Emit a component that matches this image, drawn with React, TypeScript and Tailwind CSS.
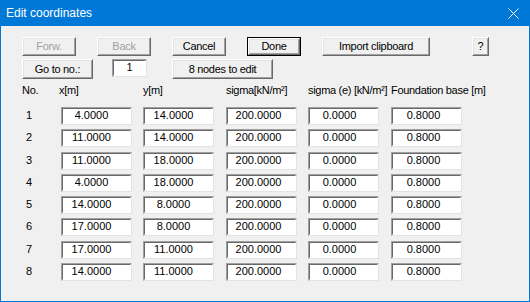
import React from "react";

const font = { fontFamily: '"Liberation Sans", Arial, sans-serif' };

function Btn({
  w,
  h = "h-[19px]",
  children,
  disabled,
  def,
  cls = "",
}: {
  w: string;
  h?: string;
  children: React.ReactNode;
  disabled?: boolean;
  def?: boolean;
  cls?: string;
}) {
  const inner = (
    <div className="h-full border border-t-white border-l-white border-b-[#696969] border-r-[#696969]">
      <div
        className={`h-full border border-t-[#e3e3e3] border-l-[#e3e3e3] border-b-[#a0a0a0] border-r-[#a0a0a0] bg-[#f0f0f0] flex items-center justify-center text-[11px] leading-[13px] tracking-[-0.3px] ${
          disabled ? "text-[#a0a0a0]" : "text-black"
        }`}
      >
        {children}
      </div>
    </div>
  );
  return (
    <div className={`${w} ${h} shrink-0 ${def ? "border border-black" : ""} ${cls}`}>{inner}</div>
  );
}

function Field({ value, w = "w-[71px]", pr = "pr-[10px]" }: { value: string; w?: string; pr?: string }) {
  return (
    <div className={`${w} h-[18px] shrink-0 border border-t-[#a0a0a0] border-l-[#a0a0a0] border-b-[#e3e3e3] border-r-[#e3e3e3]`}>
      <div
        className={`h-full border border-t-[#696969] border-l-[#696969] border-b-white border-r-white bg-white flex items-center justify-center ${pr} pb-[2px] text-[11px] leading-[13px] text-black`}
      >
        {value}
      </div>
    </div>
  );
}

const rows = [
  ["4.0000", "14.0000"],
  ["11.0000", "14.0000"],
  ["11.0000", "18.0000"],
  ["4.0000", "18.0000"],
  ["14.0000", "8.0000"],
  ["17.0000", "8.0000"],
  ["17.0000", "11.0000"],
  ["14.0000", "11.0000"],
];

const rowMt = ["mt-[10px]", "mt-[4px]", "mt-[5px]", "mt-[4px]", "mt-[4px]", "mt-[4px]", "mt-[5px]", "mt-[4px]"];

export default function App() {
  return (
    <div
      className="w-[530px] h-[302px] border border-[#0078d7] bg-[#0078d7] flex flex-col overflow-hidden"
      style={font}
    >
      <div className="h-[25px] shrink-0 flex items-center justify-between pl-[5px] pr-[10px]">
        <span className="text-white text-[12px] leading-[14px] pb-[1px]">Edit coordinates</span>
        <svg width="11" height="11" viewBox="0 0 11 11" className="mb-[1px]">
          <path d="M0.5 0.5 L10.5 10.5 M10.5 0.5 L0.5 10.5" stroke="white" strokeWidth="1" />
        </svg>
      </div>
      <div className="flex-1 bg-[#f0f0f0] pl-[21px] pt-[11px] flex flex-col">
        <div className="flex items-start">
          <Btn w="w-[54px]" disabled>
            Forw.
          </Btn>
          <Btn w="w-[54px]" disabled cls="ml-[21px]">
            Back
          </Btn>
          <Btn w="w-[54px]" cls="ml-[21px]">
            Cancel
          </Btn>
          <Btn w="w-[54px]" def cls="ml-[21px]">
            Done
          </Btn>
          <Btn w="w-[108px]" cls="ml-[21px]">
            Import clipboard
          </Btn>
          <Btn w="w-[17px]" cls="ml-[42px]">
            ?
          </Btn>
        </div>
        <div className="flex items-start mt-[3px]">
          <Btn w="w-[71px]" h="h-[20px]">
            Go to no.:
          </Btn>
          <div className="ml-[19px]">
            <Field value="1" w="w-[35px]" pr="pr-0" />
          </div>
          <Btn w="w-[101px]" h="h-[20px]" cls="ml-[25px]">
            8 nodes to edit
          </Btn>
        </div>
        <div className="grid grid-cols-[39px_82px_83px_82px_83px_90px] mt-[5px] h-[13px] text-[11px] leading-[13px] tracking-[-0.3px] text-black whitespace-nowrap">
          <span>No.</span>
          <span className="-ml-[2px]">x[m]</span>
          <span>y[m]</span>
          <span>sigma[kN/m²]</span>
          <span>sigma (e) [kN/m²]</span>
          <span>Foundation base [m]</span>
        </div>
        {rows.map((r, i) => (
          <div
            key={i}
            className={`grid grid-cols-[39px_82px_83px_82px_83px_90px] items-center h-[18px] ${rowMt[i]}`}
          >
            <span className="pl-[4px] pb-[2px] text-[11px] leading-[13px] text-black">{i + 1}</span>
            <Field value={r[0]} />
            <Field value={r[1]} />
            <Field value="200.0000" pr="pr-[6px]" />
            <Field value="0.0000" pr="pr-[8px]" />
            <Field value="0.8000" pr="pr-[6px]" />
          </div>
        ))}
      </div>
    </div>
  );
}
